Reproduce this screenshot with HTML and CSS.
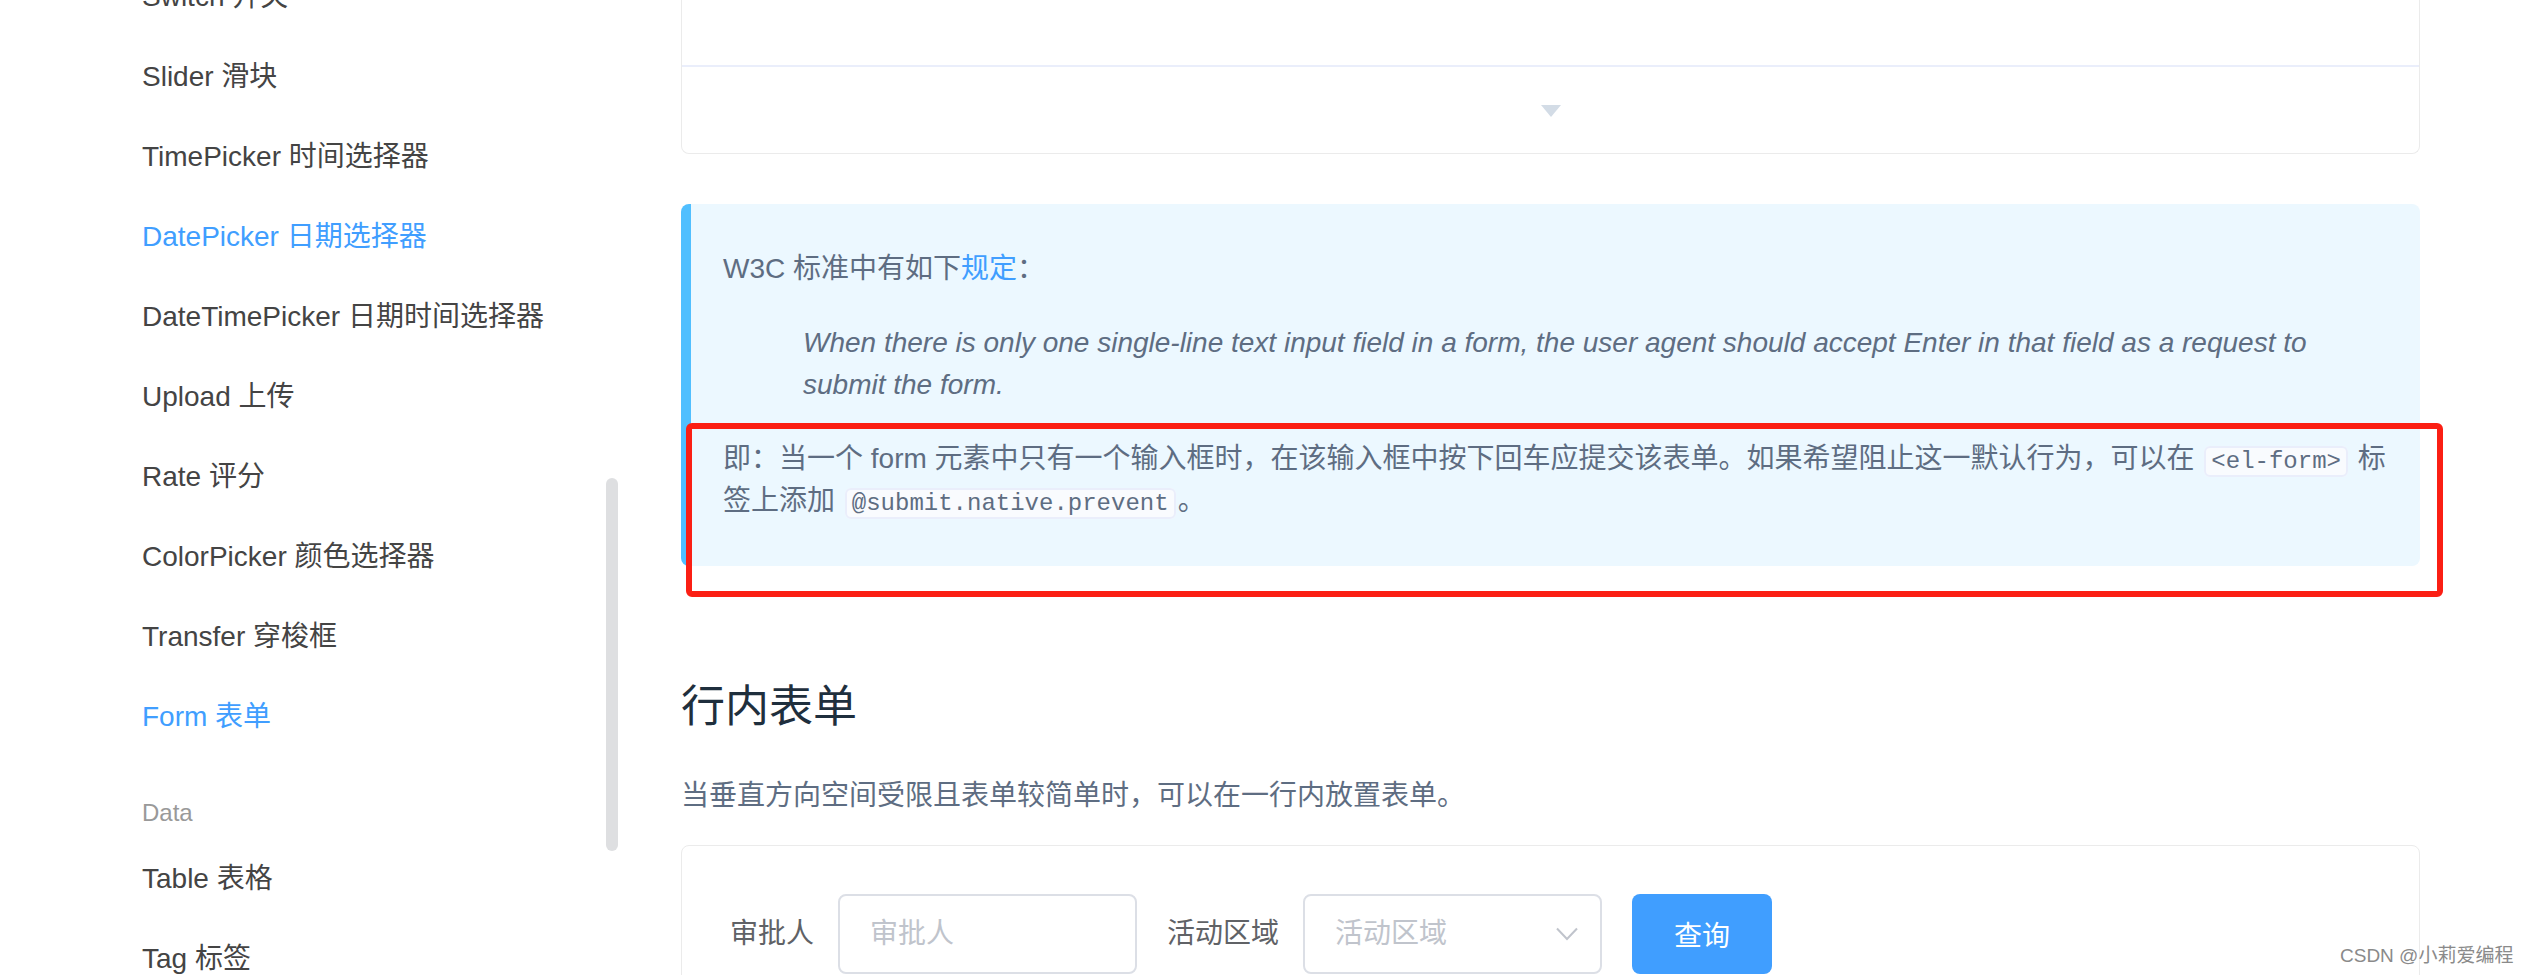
FILE: index.html
```html
<!DOCTYPE html>
<html lang="zh-CN">
<head>
<meta charset="utf-8">
<title>Form 表单</title>
<link rel="stylesheet" href="styles.css">
</head>
<body>
<div class="page">
  <aside class="side">
    <ul class="nav">
      <li class="nav-item">Switch 开关</li>
      <li class="nav-item">Slider 滑块</li>
      <li class="nav-item">TimePicker 时间选择器</li>
      <li class="nav-item active">DatePicker 日期选择器</li>
      <li class="nav-item">DateTimePicker 日期时间选择器</li>
      <li class="nav-item">Upload 上传</li>
      <li class="nav-item">Rate 评分</li>
      <li class="nav-item">ColorPicker 颜色选择器</li>
      <li class="nav-item">Transfer 穿梭框</li>
      <li class="nav-item active">Form 表单</li>
    </ul>
    <div class="nav-group-title">Data</div>
    <ul class="nav">
      <li class="nav-item">Table 表格</li>
      <li class="nav-item">Tag 标签</li>
    </ul>
    <div class="scroll-thumb"></div>
  </aside>

  <main class="content">
    <section class="demo-block demo-block-cut">
      <div class="demo-source-cut"></div>
      <div class="demo-control"><span class="caret-down"></span></div>
    </section>

    <div class="tip">
      <p class="tip-p">W3C 标准中有如下<a class="link">规定</a>：</p>
      <blockquote class="tip-quote">When there is only one single-line text input field in a form, the user agent should accept Enter in that field as a request to submit the form.</blockquote>
      <p class="tip-p">即：当一个 form 元素中只有一个输入框时，在该输入框中按下回车应提交该表单。如果希望阻止这一默认行为，可以在 <code class="code">&lt;el-form&gt;</code> 标签上添加 <code class="code">@submit.native.prevent</code>。</p>
    </div>

    <h3 class="section-title">行内表单</h3>
    <p class="section-desc">当垂直方向空间受限且表单较简单时，可以在一行内放置表单。</p>

    <section class="demo-block">
      <div class="demo-source">
        <form class="form-inline">
          <div class="form-item">
            <label class="form-label">审批人</label>
            <input class="input" type="text" placeholder="审批人">
          </div>
          <div class="form-item">
            <label class="form-label">活动区域</label>
            <div class="select">
              <input class="input" type="text" placeholder="活动区域" readonly>
              <svg class="select-arrow" width="22" height="14" viewBox="0 0 22 14"><path d="M1 1.5 L11 12 L21 1.5" fill="none" stroke="#c0c4cc" stroke-width="2"/></svg>
            </div>
          </div>
          <button class="btn-primary" type="button">查询</button>
        </form>
      </div>
    </section>
  </main>

  <div class="annotation"></div>
  <div class="watermark">CSDN @小莉爱编程</div>
</div>
</body>
</html>
```
FILE: styles.css
```css
html, body {
  margin: 0;
  padding: 0;
  background: #fff;
}
body {
  width: 2526px;
  height: 975px;
  overflow: hidden;
  font-family: "Liberation Sans", "Noto Sans CJK SC", sans-serif;
}
.page {
  position: relative;
  display: flex;
  align-items: flex-start;
  width: 2526px;
  height: 975px;
}

/* sidebar */
.side {
  position: relative;
  flex: 0 0 620px;
  width: 620px;
  height: 975px;
  box-sizing: border-box;
  padding-left: 142px;
  margin-top: -43px;
}
.nav {
  list-style: none;
  margin: 0;
  padding: 0;
}
.nav-item {
  font-size: 28px;
  line-height: 80px;
  height: 80px;
  color: #444;
  white-space: nowrap;
}
.nav-item.active {
  color: #409eff;
}
.nav-group-title {
  margin-top: 30px;
  font-size: 24px;
  line-height: 52px;
  color: #999;
}
.scroll-thumb {
  position: absolute;
  left: 606px;
  top: 521px;
  width: 12px;
  height: 373px;
  border-radius: 6px;
  background: #dedfe1;
}

/* content */
.content {
  flex: 0 0 1739px;
  width: 1739px;
  margin-left: 61px;
  display: flex;
  flex-direction: column;
}
.demo-block {
  border: 1px solid #ebebeb;
  border-radius: 8px;
  box-sizing: border-box;
}
.demo-block-cut {
  border-top: none;
  border-radius: 0 0 8px 8px;
}
.demo-source-cut {
  height: 65px;
}
.demo-control {
  border-top: 2px solid #eaeefb;
  height: 86px;
  display: flex;
  align-items: center;
  justify-content: center;
}
.caret-down {
  width: 0;
  height: 0;
  border-left: 10px solid transparent;
  border-right: 10px solid transparent;
  border-top: 12px solid #d3dce6;
  margin-top: 2px;
}

.tip {
  margin-top: 50px;
  padding: 16px 32px;
  background: #ecf8ff;
  border-left: 10px solid #50bfff;
  border-radius: 8px;
  color: #5e6d82;
  font-size: 28px;
  line-height: 42px;
}
.tip-p {
  margin: 28px 0;
}
.link {
  color: #409eff;
  text-decoration: none;
}
.tip-quote {
  margin: 32px 80px;
  font-style: italic;
}
.code {
  font-family: "Liberation Mono", "Noto Sans CJK SC", monospace;
  font-size: 24px;
  line-height: 28px;
  padding: 0 5px;
  margin: 0 2px;
  background: #f9fbfe;
  border: 2px solid #eaeefb;
  border-radius: 6px;
  color: #5e6d82;
}

.section-title {
  margin: 108px 0 0;
  font-size: 44px;
  font-weight: 400;
  line-height: 66px;
  color: #1f2f3d;
}
.section-desc {
  margin: 35px 0 28px;
  font-size: 28px;
  line-height: 42px;
  color: #5e6d82;
}

.demo-source {
  padding: 48px;
}
.form-inline {
  display: flex;
  align-items: center;
  margin: 0;
}
.form-item {
  display: flex;
  align-items: center;
  margin-right: 30px;
}
.form-label {
  font-size: 28px;
  line-height: 80px;
  color: #606266;
  padding-right: 24px;
}
.input {
  box-sizing: border-box;
  width: 299px;
  height: 80px;
  padding: 0 30px;
  border: 2px solid #dcdfe6;
  border-radius: 8px;
  font-family: "Liberation Sans", "Noto Sans CJK SC", sans-serif;
  font-size: 28px;
  color: #606266;
  background: #fff;
  outline: none;
}
.input::placeholder {
  color: #c0c4cc;
}
.select {
  position: relative;
  display: flex;
}
.select-arrow {
  position: absolute;
  right: 24px;
  top: 33px;
}
.btn-primary {
  box-sizing: border-box;
  width: 140px;
  height: 80px;
  border: none;
  border-radius: 8px;
  background: #409eff;
  color: #fff;
  font-family: "Liberation Sans", "Noto Sans CJK SC", sans-serif;
  font-size: 28px;
  padding: 0;
}

/* overlays */
.annotation {
  position: absolute;
  left: 686px;
  top: 423px;
  width: 1757px;
  height: 174px;
  box-sizing: border-box;
  border: 6px solid #fb1f14;
  border-radius: 6px;
}
.watermark {
  position: absolute;
  left: 2340px;
  top: 943px;
  font-size: 19px;
  line-height: 26px;
  color: #8a8a8a;
  text-shadow: 0 0 1px #fff;
  white-space: nowrap;
}
```
